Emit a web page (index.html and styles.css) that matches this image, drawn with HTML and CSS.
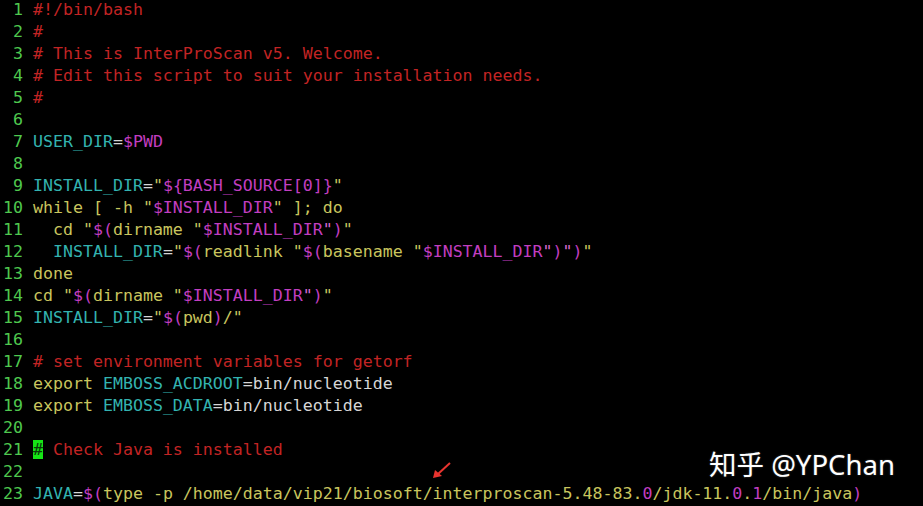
FILE: index.html
```html
<!DOCTYPE html>
<html>
<head>
<meta charset="utf-8">
<link rel="stylesheet" href="styles.css">
</head>
<body>
<div class="term">
<div class="line"><span class="ln"> 1 </span><span class="cm">#!/bin/bash</span></div>
<div class="line"><span class="ln"> 2 </span><span class="cm">#</span></div>
<div class="line"><span class="ln"> 3 </span><span class="cm"># This is InterProScan v5. Welcome.</span></div>
<div class="line"><span class="ln"> 4 </span><span class="cm"># Edit this script to suit your installation needs.</span></div>
<div class="line"><span class="ln"> 5 </span><span class="cm">#</span></div>
<div class="line"><span class="ln"> 6 </span></div>
<div class="line"><span class="ln"> 7 </span><span class="id">USER_DIR</span><span class="op">=</span><span class="mg">$PWD</span></div>
<div class="line"><span class="ln"> 8 </span></div>
<div class="line"><span class="ln"> 9 </span><span class="id">INSTALL_DIR</span><span class="op">=</span><span class="ye">"</span><span class="mg">${BASH_SOURCE[0]}</span><span class="ye">"</span></div>
<div class="line"><span class="ln">10 </span><span class="ye">while [ -h "</span><span class="mg">$INSTALL_DIR</span><span class="ye">" ]; do</span></div>
<div class="line"><span class="ln">11 </span><span class="ye">  cd "</span><span class="mg">$(</span><span class="ye">dirname "</span><span class="mg">$INSTALL_DIR</span><span class="pk">"</span><span class="mg">)</span><span class="ye">"</span></div>
<div class="line"><span class="ln">12 </span>  <span class="id">INSTALL_DIR</span><span class="op">=</span><span class="ye">"</span><span class="mg">$(</span><span class="ye">readlink "</span><span class="mg">$(</span><span class="ye">basename "</span><span class="mg">$INSTALL_DIR</span><span class="pk">"</span><span class="mg">)</span><span class="pk">"</span><span class="mg">)</span><span class="ye">"</span></div>
<div class="line"><span class="ln">13 </span><span class="ye">done</span></div>
<div class="line"><span class="ln">14 </span><span class="ye">cd "</span><span class="mg">$(</span><span class="ye">dirname "</span><span class="mg">$INSTALL_DIR</span><span class="pk">"</span><span class="mg">)</span><span class="ye">"</span></div>
<div class="line"><span class="ln">15 </span><span class="id">INSTALL_DIR</span><span class="op">=</span><span class="ye">"</span><span class="mg">$(</span><span class="ye">pwd</span><span class="mg">)</span><span class="ye">/"</span></div>
<div class="line"><span class="ln">16 </span></div>
<div class="line"><span class="ln">17 </span><span class="cm"># set environment variables for getorf</span></div>
<div class="line"><span class="ln">18 </span><span class="ye">export</span> <span class="id">EMBOSS_ACDROOT</span><span class="op">=bin/nucleotide</span></div>
<div class="line"><span class="ln">19 </span><span class="ye">export</span> <span class="id">EMBOSS_DATA</span><span class="op">=bin/nucleotide</span></div>
<div class="line"><span class="ln">20 </span></div>
<div class="line"><span class="ln">21 </span><span class="cursor">#</span><span class="cm"> Check Java is installed</span></div>
<div class="line"><span class="ln">22 </span></div>
<div class="line"><span class="ln">23 </span><span class="id">JAVA</span><span class="op">=</span><span class="mg">$(</span><span class="ye">type -p /home/data/vip21/biosoft/interproscan-5.48-83.</span><span class="mg">0</span><span class="ye">/jdk-11.</span><span class="mg">0</span><span class="ye">.</span><span class="mg">1</span><span class="ye">/bin/java</span><span class="mg">)</span></div>
</div>
<svg class="arrow" width="24" height="20" viewBox="0 0 24 20">
  <line x1="19" y1="2" x2="7" y2="13" stroke="#e8342f" stroke-width="2"/>
  <polygon points="2,17 4,9 11,15" fill="#e8342f"/>
</svg>
<div class="mark">知乎 @YPChan</div>
</body>
</html>
```
FILE: styles.css
```css
html, body {
  margin: 0;
  padding: 0;
  background: #000;
}
body {
  width: 923px;
  height: 506px;
  overflow: hidden;
  position: relative;
}
.term {
  margin-top: -1px;
  padding-left: 3px;
  font-family: "DejaVu Sans Mono", "Liberation Mono", monospace;
  font-size: 16.6px;
  line-height: 22px;
  color: #d4d4d4;
}
.line {
  height: 22px;
  white-space: pre;
}
.ln { color: #4fc84f; }
.cm { color: #c22424; }
.id { color: #33b3b0; }
.op { color: #d6d6d6; }
.mg { color: #c23ec0; }
.pk { color: #d76ad2; }
.ye { color: #c9c55e; }
.cursor {
  background: #16e416;
  color: #0a3a0a;
}
.arrow {
  position: absolute;
  left: 431px;
  top: 461px;
}
.mark {
  position: absolute;
  left: 709px;
  top: 447px;
  font-family: "Noto Sans", "Noto Sans CJK SC", sans-serif;
  font-size: 27.5px;
  line-height: 36px;
  color: #ffffff;
  text-shadow: 0 0 2px rgba(120,120,120,0.6);
  white-space: pre;
}
```
